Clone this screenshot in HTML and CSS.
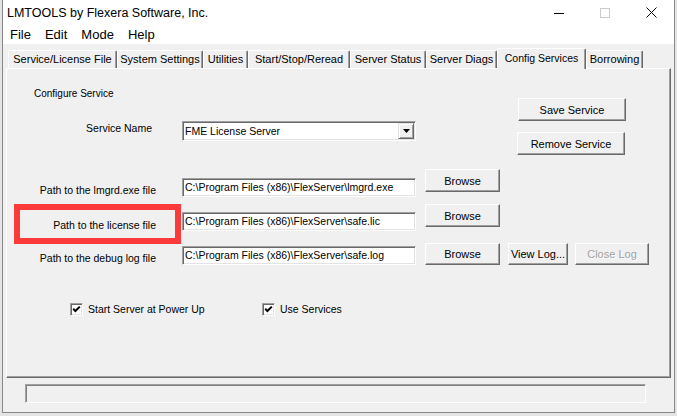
FILE: index.html
```html
<!DOCTYPE html>
<html lang="en">
<head>
    <meta charset="UTF-8">
    <meta name="viewport" content="width=device-width, initial-scale=1.0">
    <title>LMTOOLS by Flexera Software, Inc.</title>
    <link rel="stylesheet" href="styles.css">
</head>
<body>
    <div class="ventana">
        <div class="titulo">
            <span class="titulo-texto">LMTOOLS by Flexera Software, Inc.</span>
            <div class="titulo-botones">
                <span class="titulo-boton">
                    <svg width="10" height="10" viewBox="0 0 10 10"><path d="M0 5.5H10" stroke="#000" stroke-width="1"/></svg>
                </span>
                <span class="titulo-boton">
                    <svg width="10" height="10" viewBox="0 0 10 10"><rect x="0.5" y="0.5" width="9" height="9" fill="none" stroke="#cccccc"/></svg>
                </span>
                <span class="titulo-boton">
                    <svg width="11" height="11" viewBox="0 0 11 11"><path d="M0.5 0.5L10.5 10.5M10.5 0.5L0.5 10.5" stroke="#000" stroke-width="1"/></svg>
                </span>
            </div>
        </div>

        <div class="menu">
            <span class="menu-item">File</span>
            <span class="menu-item">Edit</span>
            <span class="menu-item">Mode</span>
            <span class="menu-item">Help</span>
        </div>

        <div class="cliente">
            <div class="pestanas">
                <div class="pestana">Service/License File</div>
                <div class="pestana">System Settings</div>
                <div class="pestana">Utilities</div>
                <div class="pestana">Start/Stop/Reread</div>
                <div class="pestana">Server Status</div>
                <div class="pestana">Server Diags</div>
                <div class="pestana activa">Config Services</div>
                <div class="pestana">Borrowing</div>
            </div>

            <div class="panel">
                <div class="arriba">
                    <div class="arriba-izq">
                        <div class="encabezado">Configure Service</div>
                        <div class="fila-nombre">
                            <div class="etiqueta etiqueta-nombre">Service Name</div>
                            <div class="campo selector">
                                <span>FME License Server</span>
                                <span class="flecha">
                                    <svg width="7" height="4" viewBox="0 0 7 4"><polygon points="0,0 7,0 3.5,4" fill="#000"/></svg>
                                </span>
                            </div>
                        </div>
                    </div>
                    <div class="arriba-der">
                        <button class="boton boton-servicio guardar">Save Service</button>
                        <button class="boton boton-servicio quitar">Remove Service</button>
                    </div>
                </div>

                <div class="fila fila-1">
                    <div class="etiqueta">Path to the lmgrd.exe file</div>
                    <div class="campo">C:\Program Files (x86)\FlexServer\lmgrd.exe</div>
                    <button class="boton examinar">Browse</button>
                </div>

                <div class="fila fila-2">
                    <div class="etiqueta resaltada">Path to the license file</div>
                    <div class="campo">C:\Program Files (x86)\FlexServer\safe.lic</div>
                    <button class="boton examinar">Browse</button>
                </div>

                <div class="fila fila-3">
                    <div class="etiqueta">Path to the debug log file</div>
                    <div class="campo">C:\Program Files (x86)\FlexServer\safe.log</div>
                    <button class="boton examinar">Browse</button>
                    <button class="boton ver-log">View Log...</button>
                    <button class="boton cerrar-log" disabled>Close Log</button>
                </div>

                <div class="casillas">
                    <label class="casilla-item">
                        <span class="casilla">
                            <svg width="9" height="9" viewBox="0 0 9 9"><path d="M1.2 3.8L3.4 6L7.8 1.6" fill="none" stroke="#000" stroke-width="2"/></svg>
                        </span>
                        Start Server at Power Up
                    </label>
                    <label class="casilla-item">
                        <span class="casilla">
                            <svg width="9" height="9" viewBox="0 0 9 9"><path d="M1.2 3.8L3.4 6L7.8 1.6" fill="none" stroke="#000" stroke-width="2"/></svg>
                        </span>
                        Use Services
                    </label>
                </div>
            </div>

            <div class="estado"></div>
        </div>
    </div>
</body>
</html>
```

FILE: styles.css
```css
body {
    margin: 0;
    background: #e4e4e4; /* lo que se ve detrás de la ventana */
    font-family: "Liberation Sans", Arial, sans-serif;
    font-size: 11px;
    color: #000;
}

.ventana {
    width: 673px;
    margin-left: 2px;
    box-sizing: border-box;
    border: 1px solid #888;
    border-top: none;
    background: #f0f0f0;
}

/* Barra de título */
.titulo {
    height: 25px;
    display: flex;
    align-items: center;
    background: #fff;
}

.titulo-texto {
    padding-left: 4px;
    font-size: 12.5px;
}

.titulo-botones {
    margin-left: auto;
    display: flex;
}

.titulo-boton {
    width: 46px;
    height: 25px;
    display: flex;
    align-items: center;
    justify-content: center;
}

/* Menú */
.menu {
    height: 19px;
    display: flex;
    align-items: center;
    background: #fff;
    font-size: 13px;
}

.menu-item {
    padding: 0 7px;
}

.cliente {
    padding-top: 4px;
    padding-bottom: 9px;
}

/* Pestañas */
.pestanas {
    height: 20px;
    margin-left: 5px;
    display: flex;
    align-items: flex-end;
}

.pestana {
    height: 18px;
    box-sizing: border-box;
    border-top: 1px solid #fff;
    border-left: 1px solid #fff;
    border-right: 1px solid #696969;
    box-shadow: inset -1px 0 0 #a0a0a0;
    border-top-left-radius: 2px;
    border-top-right-radius: 2px;
    line-height: 17px;
    text-align: center;
    white-space: nowrap;
}

.pestana:nth-child(1) { width: 109px; }
.pestana:nth-child(2) { width: 86px; }
.pestana:nth-child(3) { width: 45px; }
.pestana:nth-child(4) { width: 102px; }
.pestana:nth-child(5) { width: 76px; }
.pestana:nth-child(6) { width: 71px; }
.pestana:nth-child(7) { width: 89px; }
.pestana:nth-child(8) { width: 57px; }

.pestana.activa {
    height: 21px;
    line-height: 19px;
    margin-bottom: -1px;
    position: relative; /* tapa el borde superior del panel */
    z-index: 1;
    background: #f0f0f0;
    font-size: 10.5px;
}

/* Panel de la pestaña */
.panel {
    width: 665px;
    height: 310px;
    margin-left: 3px;
    box-sizing: border-box;
    border-top: 1px solid #fff;
    border-left: 1px solid #fff;
    border-right: 1px solid #696969;
    border-bottom: 1px solid #696969;
    box-shadow: inset -1px -1px 0 #a0a0a0;
    font-size: 10.5px;
}

.arriba {
    display: flex;
    height: 86px;
}

.arriba-izq {
    width: 409px;
    padding-top: 18px;
}

.encabezado {
    margin-left: 27px;
    line-height: 13px;
    font-size: 10px;
}

.fila-nombre {
    display: flex;
    margin-top: 21px;
}

.arriba-der {
    margin-left: 101px;
    padding-top: 29px;
    display: flex;
    flex-direction: column;
}

.etiqueta {
    width: 175px;
    box-sizing: border-box;
    padding-right: 26px;
    text-align: right;
    line-height: 13px;
    white-space: nowrap;
}

.etiqueta-nombre {
    padding-right: 30px;
    margin-top: 1px;
}

/* Cajas de texto hundidas */
.campo {
    width: 234px;
    height: 19px;
    box-sizing: border-box;
    background: #fff;
    border-top: 1px solid #a0a0a0;
    border-left: 1px solid #a0a0a0;
    border-right: 1px solid #fff;
    border-bottom: 1px solid #fff;
    box-shadow: inset 1px 1px 0 #696969, inset -1px -1px 0 #e3e3e3;
    padding-left: 2px;
    line-height: 17px;
    white-space: nowrap;
    overflow: hidden;
}

.selector {
    height: 20px;
    display: flex;
    align-items: center;
    padding: 1px 1px 1px 2px;
}

.flecha {
    margin-left: auto;
    width: 16px;
    height: 16px;
    box-sizing: border-box;
    display: flex;
    align-items: center;
    justify-content: center;
    background: #f0f0f0;
    border-top: 1px solid #e3e3e3;
    border-left: 1px solid #e3e3e3;
    border-right: 1px solid #696969;
    border-bottom: 1px solid #696969;
    box-shadow: inset 1px 1px 0 #fff, inset -1px -1px 0 #a0a0a0;
}

/* Botones en relieve */
.boton {
    margin: 0;
    padding: 0;
    box-sizing: border-box;
    font: inherit;
    font-size: 11px;
    color: #000;
    background: #f0f0f0;
    border-top: 1px solid #fff;
    border-left: 1px solid #fff;
    border-right: 1px solid #696969;
    border-bottom: 1px solid #696969;
    box-shadow: inset -1px -1px 0 #a0a0a0;
    text-align: center;
    white-space: nowrap;
}

.boton-servicio {
    width: 108px;
    height: 23px;
}

.guardar {
    margin-left: 1px;
}

.quitar {
    margin-top: 11px;
}

.fila {
    display: flex;
    align-items: flex-start;
}

.fila-1 {
    margin-top: 14px;
    height: 35px;
}

.fila-1 .etiqueta { margin-top: 15px; }
.fila-1 .campo { margin-top: 9px; }

.fila-2 {
    height: 39px;
}

.fila-2 .campo {
    margin-top: 8px;
    margin-left: 1px;
}

.resaltada {
    width: 167px;
    height: 40px;
    margin-left: 7px;
    border: 6px solid #fb3b3b;
    padding-right: 19px;
    padding-top: 2px;
    display: flex;
    align-items: center;
    justify-content: flex-end;
}

.fila-3 {
    height: 22px;
}

.fila-3 .etiqueta { margin-top: 9px; }
.fila-3 .campo { margin-top: 3px; }

.examinar {
    width: 75px;
    height: 23px;
    margin-left: 9px;
}

.fila-3 .boton {
    height: 22px;
}

.ver-log {
    width: 60px;
    margin-left: 8px;
}

.cerrar-log {
    width: 74px;
    margin-left: 7px;
    color: #a0a0a0;
    text-shadow: 1px 1px 0 #fff;
}

/* Casillas de verificación */
.casillas {
    display: flex;
    margin-top: 38px;
    margin-left: 63px;
}

.casilla-item {
    width: 192px;
    display: flex;
    align-items: center;
    line-height: 13px;
    white-space: nowrap;
}

.casilla {
    width: 13px;
    height: 13px;
    margin-right: 5px;
    box-sizing: border-box;
    background: #fff;
    border-top: 1px solid #a0a0a0;
    border-left: 1px solid #a0a0a0;
    border-right: 1px solid #fff;
    border-bottom: 1px solid #fff;
    box-shadow: inset 1px 1px 0 #696969, inset -1px -1px 0 #e3e3e3;
    display: flex;
    align-items: center;
    justify-content: center;
}

/* Barra de estado */
.estado {
    width: 621px;
    height: 19px;
    margin: 6px 0 0 22px;
    box-sizing: border-box;
    border-top: 1px solid #a0a0a0;
    border-left: 1px solid #a0a0a0;
    border-right: 1px solid #fff;
    border-bottom: 1px solid #fff;
    box-shadow: inset 1px 1px 0 #808080;
}
```
